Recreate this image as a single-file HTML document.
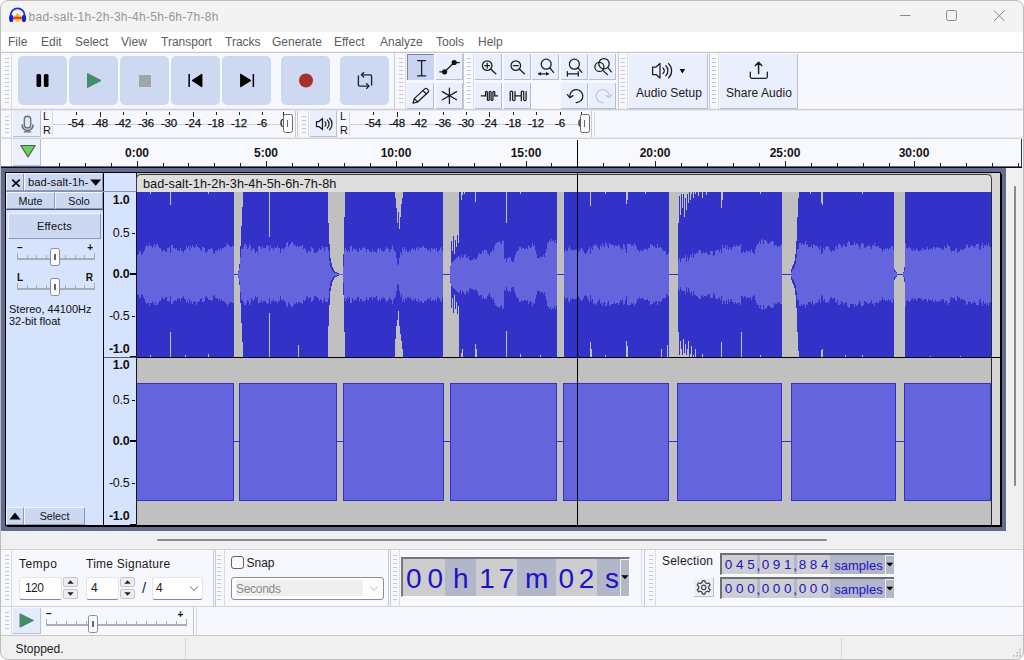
<!DOCTYPE html><html><head><meta charset="utf-8"><title>Audacity</title><style>
*{box-sizing:border-box;margin:0;padding:0}
html,body{width:1024px;height:660px;overflow:hidden;background:#f3f3f3}
body{font-family:"Liberation Sans",sans-serif;font-size:12px;color:#000;position:relative}
.a{position:absolute}
.t{position:absolute;white-space:nowrap;line-height:1}
.grab{position:absolute;width:4px;background:repeating-linear-gradient(to bottom,#c6c7cc 0,#c6c7cc 1px,transparent 1px,transparent 4px)}
.vsep{position:absolute;width:1px;background:#d9dae0}
.hsep{position:absolute;height:1px;background:#d9dae0}
.big{position:absolute;width:49px;height:49px;top:56px;background:#cdd9f0;border-radius:5px}
.sm{position:absolute;background:#e9effc;border-right:1px solid #b9bece;border-bottom:1px solid #b9bece}
.sm.sel{background:#c8d4f1;border:none;border-top:1px solid #7f86a4;border-left:1px solid #7f86a4}
.sm.sel svg{left:-1px;top:-1px}
.sm svg,.big svg{position:absolute;left:0;top:0}
.pbtn{position:absolute;background:#ccd8f1;border-top:1px solid #f2f6ff;border-left:1px solid #f2f6ff;border-right:1px solid #8f98b3;border-bottom:1px solid #8f98b3}
</style></head><body>
<div class="a" style="left:0;top:0;width:1024px;height:31px;background:#f3f3f3"></div>
<svg class="a" style="left:8px;top:7px" width="19" height="18" viewBox="0 0 19 18"><defs><linearGradient id="wg" x1="0" y1="0" x2="0" y2="1"><stop offset="0" stop-color="#ffe23c"/><stop offset="0.42" stop-color="#ff9a1e"/><stop offset="0.5" stop-color="#f0441a"/><stop offset="0.58" stop-color="#ff9a1e"/><stop offset="1" stop-color="#ffe23c"/></linearGradient></defs><path d="M5.300 11L6 9.500 6.800 8.300 7.500 9 8.300 6 9 7.200 9.700 5.300 10.400 7.600 11.100 6.600 11.800 8.800 12.500 8.200 13.200 9.700 13.900 11 13.200 12.400 12.500 13.600 11.800 13.200 11.100 15 10.400 14.200 9.700 15.600 9 14.400 8.300 15.200 7.500 13.200 6.800 13.600 6 12.400Z" fill="url(#wg)"/><rect x="5.300" y="10.600" width="8.600" height="1" fill="#e8201a"/><path d="M2.600 11V8.300a7 7 0 0 1 14 0V11" fill="none" stroke="#1d2be0" stroke-width="1.700"/><ellipse cx="3.300" cy="11.400" rx="2.200" ry="3.700" fill="#1422d4"/><ellipse cx="15.900" cy="11.400" rx="2.200" ry="3.700" fill="#1422d4"/></svg>
<div class="t" id="title" style="left:28.500px;top:11px;font-size:12px;color:#969696;letter-spacing:0.27px">bad-salt-1h-2h-3h-4h-5h-6h-7h-8h</div>
<svg class="a" style="left:890px;top:0" width="134" height="31" viewBox="0 0 134 31"><g stroke="#8a8a8a" stroke-width="1" fill="none"><path d="M10 15.500H20.500"/><rect x="56.500" y="10.500" width="10" height="10" rx="1.800"/><path d="M104 10.5l10.5 10.5M114.5 10.5L104 21"/></g></svg>
<div class="a" style="left:0;top:32px;width:1024px;height:20px;background:#fff"></div>
<div class="t" style="left:8px;top:36px;font-size:12px;color:#5c5c5c">File</div>
<div class="t" style="left:41px;top:36px;font-size:12px;color:#5c5c5c">Edit</div>
<div class="t" style="left:75px;top:36px;font-size:12px;color:#5c5c5c">Select</div>
<div class="t" style="left:121px;top:36px;font-size:12px;color:#5c5c5c">View</div>
<div class="t" style="left:161px;top:36px;font-size:12px;color:#5c5c5c">Transport</div>
<div class="t" style="left:225px;top:36px;font-size:12px;color:#5c5c5c">Tracks</div>
<div class="t" style="left:272px;top:36px;font-size:12px;color:#5c5c5c">Generate</div>
<div class="t" style="left:334px;top:36px;font-size:12px;color:#5c5c5c">Effect</div>
<div class="t" style="left:380px;top:36px;font-size:12px;color:#5c5c5c">Analyze</div>
<div class="t" style="left:436px;top:36px;font-size:12px;color:#5c5c5c">Tools</div>
<div class="t" style="left:478px;top:36px;font-size:12px;color:#5c5c5c">Help</div>
<div class="a" style="left:0;top:52px;width:1024px;height:86px;background:#f7f8fd"></div>
<div class="a" style="left:0;top:51px;width:1024px;height:1px;background:#f0f0f1"></div>
<div class="a" style="left:0;top:52px;width:1024px;height:1px;background:#c9c9cc"></div>
<div class="a" style="left:0;top:109px;width:1024px;height:1px;background:#cfd0d4"></div>
<div class="a" style="left:0;top:110px;width:1024px;height:1px;background:#e9e9ed"></div>
<div class="a" style="left:0;top:108px;width:1024px;height:1px;background:#ebecf1"></div>
<div class="a" style="left:0;top:137px;width:1024px;height:1px;background:#e6e7ec"></div>
<div class="a" style="left:0;top:138px;width:1024px;height:1px;background:#d3d4d9;z-index:2"></div>
<div class="vsep" style="left:11px;top:53px;height:56px;background:#dcdde2"></div>
<div class="grab" style="left:5px;top:58px;height:45px"></div>
<div class="big" style="left:18px"><svg width="49" height="49" viewBox="0 0 49 49"><rect x="18.5" y="18" width="4.6" height="13" rx="1.6" fill="#000"/><rect x="25.9" y="18" width="4.6" height="13" rx="1.6" fill="#000"/></svg></div>
<div class="big" style="left:69px"><svg width="49" height="49" viewBox="0 0 49 49"><path d="M18.5 17.5L32 24.5 18.5 31.5Z" fill="#468b6b" stroke="#468b6b" stroke-width="1" stroke-linejoin="round"/></svg></div>
<div class="big" style="left:120px"><svg width="49" height="49" viewBox="0 0 49 49"><rect x="19" y="19" width="12" height="12" fill="#a2a4ab"/></svg></div>
<div class="big" style="left:171px"><svg width="49" height="49" viewBox="0 0 49 49"><rect x="17.400" y="18" width="1.500" height="13" fill="#000"/><path d="M31 18L21 24.500 31 31Z" fill="#000" stroke="#000" stroke-width="0.8" stroke-linejoin="round"/></svg></div>
<div class="big" style="left:222px"><svg width="49" height="49" viewBox="0 0 49 49"><path d="M18.5 18L29 24.5 18.5 31Z" fill="#000" stroke="#000" stroke-width="0.8" stroke-linejoin="round"/><rect x="30.600" y="18" width="1.500" height="13" fill="#000"/></svg></div>
<div class="big" style="left:281px"><svg width="49" height="49" viewBox="0 0 49 49"><circle cx="25" cy="24.5" r="7" fill="#a92f2f"/></svg></div>
<div class="big" style="left:340px"><svg width="49" height="49" viewBox="0 0 49 49"><g fill="none" stroke="#23232b" stroke-width="1.350" stroke-linejoin="round" stroke-linecap="round"><path d="M21.600 18.800H30.200a1.400 1.400 0 0 1 1.400 1.400V29"/><path d="M23.700 16.500l-2.300 2.300 2.300 2.300"/><path d="M18.400 19.900V28.700a1.400 1.400 0 0 0 1.400 1.400H28.700"/><path d="M26.600 27.800l2.300 2.300-2.300 2.300"/></g></svg></div>
<div class="vsep" style="left:394px;top:53px;height:56px;background:#c9cacf"></div>
<div class="vsep" style="left:405px;top:53px;height:56px;background:#dcdde2"></div>
<div class="grab" style="left:399px;top:58px;height:45px"></div>
<div class="sm sel" style="left:407px;top:54px;width:27px;height:26px"><svg width="27" height="26" viewBox="0 0 27 26"><g fill="none" stroke="#1c1c1c" stroke-width="1.25" stroke-linecap="round" stroke-linejoin="round"><path d="M10.6 6.6H18.6M14.6 6.6V21.9M10.6 21.9H18.6"/></g></svg></div>
<div class="sm " style="left:436px;top:54px;width:27px;height:26px"><svg width="27" height="26" viewBox="0 0 27 26"><g fill="none" stroke="#1c1c1c" stroke-width="1.25" stroke-linecap="round" stroke-linejoin="round"><path d="M3.8 17.800H8.600L18.200 8.500H23.400"/></g><circle cx="8.600" cy="17.800" r="2.600" fill="#111"/><circle cx="18.200" cy="8.500" r="2.600" fill="#111"/></svg></div>
<div class="sm " style="left:407px;top:83px;width:27px;height:26px"><svg width="27" height="26" viewBox="0 0 27 26"><g fill="none" stroke="#1c1c1c" stroke-width="1.25" stroke-linecap="round" stroke-linejoin="round"><path d="M6 20.200l1.300-4.600L17.700 5.900a1.700 1.700 0 0 1 2.400 0l1 1a1.700 1.700 0 0 1 0 2.400L10.600 19Z"/><path d="M7.300 15.600l3.300 3.400M16 7.600l3.400 3.400"/></g></svg></div>
<div class="sm " style="left:436px;top:83px;width:27px;height:26px"><svg width="27" height="26" viewBox="0 0 27 26"><g fill="none" stroke="#1c1c1c" stroke-width="1.25" stroke-linecap="round" stroke-linejoin="round"><path d="M13.400 5.200V20.500M6.300 8.600L20.600 16.800M20.600 8.600L6.300 16.800"/></g></svg></div>
<div class="vsep" style="left:463px;top:53px;height:56px;background:#c9cacf"></div>
<div class="vsep" style="left:473px;top:53px;height:56px;background:#dcdde2"></div>
<div class="grab" style="left:467px;top:58px;height:45px"></div>
<div class="sm " style="left:475px;top:54px;width:27px;height:26px"><svg width="27" height="26" viewBox="0 0 27 26"><circle cx="12.2" cy="11.6" r="4.8" fill="none" stroke="#1c1c1c" stroke-width="1.25" stroke-linecap="round" stroke-linejoin="round"/><path d="M15.59 14.99L20.8 19.8" fill="none" stroke="#1c1c1c" stroke-width="1.25" stroke-linecap="round" stroke-linejoin="round"/><path d="M9.700 11.600h5M12.200 9.100v5" fill="none" stroke="#1c1c1c" stroke-width="1.25" stroke-linecap="round" stroke-linejoin="round" stroke-width="1.600"/></svg></div>
<div class="sm " style="left:504px;top:54px;width:27px;height:26px"><svg width="27" height="26" viewBox="0 0 27 26"><circle cx="11.8" cy="11.6" r="4.8" fill="none" stroke="#1c1c1c" stroke-width="1.25" stroke-linecap="round" stroke-linejoin="round"/><path d="M15.19 14.99L20.4 19.8" fill="none" stroke="#1c1c1c" stroke-width="1.25" stroke-linecap="round" stroke-linejoin="round"/><path d="M9.300 11.600h5" fill="none" stroke="#1c1c1c" stroke-width="1.25" stroke-linecap="round" stroke-linejoin="round" stroke-width="1.600"/></svg></div>
<div class="sm " style="left:532px;top:54px;width:27px;height:26px"><svg width="27" height="26" viewBox="0 0 27 26"><circle cx="14.2" cy="10.2" r="5" fill="none" stroke="#1c1c1c" stroke-width="1.25" stroke-linecap="round" stroke-linejoin="round"/><path d="M17.74 13.74L21.6 18.4" fill="none" stroke="#1c1c1c" stroke-width="1.25" stroke-linecap="round" stroke-linejoin="round"/><path d="M6.500 19.800h10" fill="none" stroke="#1c1c1c" stroke-width="1.25" stroke-linecap="round" stroke-linejoin="round"/><path d="M6 19.800l3-2v4ZM17 19.800l-3-2v4Z" fill="#1c1c1c"/></svg></div>
<div class="sm " style="left:561px;top:54px;width:27px;height:26px"><svg width="27" height="26" viewBox="0 0 27 26"><circle cx="13.4" cy="10.2" r="5" fill="none" stroke="#1c1c1c" stroke-width="1.25" stroke-linecap="round" stroke-linejoin="round"/><path d="M16.94 13.74L20.8 18.4" fill="none" stroke="#1c1c1c" stroke-width="1.25" stroke-linecap="round" stroke-linejoin="round"/><path d="M6.400 19.800h10.900M6.400 17.600v4.400M17.300 17.600v4.400" fill="none" stroke="#1c1c1c" stroke-width="1.25" stroke-linecap="round" stroke-linejoin="round"/></svg></div>
<div class="sm " style="left:589px;top:54px;width:27px;height:26px"><svg width="27" height="26" viewBox="0 0 27 26"><circle cx="10.400" cy="12.900" r="4.500" fill="none" stroke="#1c1c1c" stroke-width="1.25" stroke-linecap="round" stroke-linejoin="round"/><circle cx="15" cy="9.700" r="5.200" fill="none" stroke="#1c1c1c" stroke-width="1.25" stroke-linecap="round" stroke-linejoin="round"/><path d="M18.700 13.400L22.400 17.800M13.600 16.100L18.500 20.700" fill="none" stroke="#1c1c1c" stroke-width="1.25" stroke-linecap="round" stroke-linejoin="round"/></svg></div>
<div class="sm " style="left:475px;top:83px;width:27px;height:26px"><svg width="27" height="26" viewBox="0 0 27 26"><path d="M6.200 12.800H10.500M19.750 12.800H22.600" fill="none" stroke="#1c1c1c" stroke-width="1.25" stroke-linecap="round" stroke-linejoin="round" stroke="#555"/><path d="M10.500 12.800V9.300a0.925 0.925 0 0 1 1.85 0V16.500a0.925 0.925 0 0 0 1.85 0V9.300a0.925 0.925 0 0 1 1.85 0V16.500a0.925 0.925 0 0 0 1.85 0V9.300a0.925 0.925 0 0 1 1.85 0V12.800" fill="none" stroke="#1c1c1c" stroke-width="1.25" stroke-linecap="round" stroke-linejoin="round" stroke-width="1.050"/></svg></div>
<div class="sm " style="left:504px;top:83px;width:27px;height:26px"><svg width="27" height="26" viewBox="0 0 27 26"><path d="M11 12.800H17.300" fill="none" stroke="#1c1c1c" stroke-width="1.25" stroke-linecap="round" stroke-linejoin="round" stroke="#555"/><path d="M6.200 17.700V9.300a1.200 1.200 0 0 1 2.400 0v7.200a1.200 1.200 0 0 0 2.400 0V8.500M17.300 17.700V9.300a1.200 1.200 0 0 1 2.400 0v7.200a1.200 1.200 0 0 0 2.400 0V8.500" fill="none" stroke="#1c1c1c" stroke-width="1.25" stroke-linecap="round" stroke-linejoin="round" stroke-width="1.150"/></svg></div>
<div class="sm " style="left:561px;top:83px;width:27px;height:26px"><svg width="27" height="26" viewBox="0 0 27 26"><path d="M8.900 14.200a6.500 6.500 0 1 1 6.300 5.400" fill="none" stroke="#1c1c1c" stroke-width="1.25" stroke-linecap="round" stroke-linejoin="round"/><path d="M6.400 11.600l2.400 3 3.200-2" fill="none" stroke="#1c1c1c" stroke-width="1.25" stroke-linecap="round" stroke-linejoin="round"/></svg></div>
<div class="sm " style="left:589px;top:83px;width:27px;height:26px"><svg width="27" height="26" viewBox="0 0 27 26"><path d="M20.100 14.200a6.500 6.500 0 1 0-6.300 5.400" fill="none" stroke="#c3c6d0" stroke-width="1.25" stroke-linecap="round" stroke-linejoin="round"/><path d="M22.600 11.600l-2.400 3-3.200-2" fill="none" stroke="#c3c6d0" stroke-width="1.25" stroke-linecap="round" stroke-linejoin="round"/></svg></div>
<div class="vsep" style="left:618px;top:53px;height:56px;background:#c9cacf"></div>
<div class="vsep" style="left:627px;top:53px;height:56px;background:#dcdde2"></div>
<div class="grab" style="left:621px;top:58px;height:45px"></div>
<div class="sm " style="left:629px;top:54px;width:79px;height:55px"><svg width="79" height="55" viewBox="0 0 79 55"></svg></div>
<svg class="a" style="left:648px;top:58px" width="44" height="24" viewBox="0 0 44 24"><g fill="none" stroke="#1c1c1c" stroke-width="1.25" stroke-linecap="round" stroke-linejoin="round"><path d="M4.600 9H8L12 5.500V20L8 16.500H4.600Z"/><path d="M15 10a3.600 3.600 0 0 1 0 5.500M17.800 7.800a6.800 6.800 0 0 1 0 9.900M20.600 5.600a10 10 0 0 1 0 14.300"/></g><path d="M31.600 11h5.600l-2.800 4.400Z" fill="#111"/></svg>
<div class="t" style="left:636px;top:87px;font-size:12px;color:#1a1a1a;letter-spacing:0.05px">Audio Setup</div>
<div class="vsep" style="left:709px;top:53px;height:56px;background:#c9cacf"></div>
<div class="vsep" style="left:718px;top:53px;height:56px;background:#dcdde2"></div>
<div class="grab" style="left:712px;top:58px;height:45px"></div>
<div class="sm " style="left:720px;top:54px;width:78px;height:55px"><svg width="78" height="55" viewBox="0 0 78 55"></svg></div>
<svg class="a" style="left:746px;top:58px" width="26" height="24" viewBox="0 0 26 24"><g fill="none" stroke="#1c1c1c" stroke-width="1.25" stroke-linecap="round" stroke-linejoin="round"><path d="M12.600 15.500V4.600M9.500 7.600L12.600 4.300 15.700 7.600" stroke-width="1.450"/><path d="M4.300 14V18.800a1.500 1.500 0 0 0 1.500 1.500H19.800a1.500 1.500 0 0 0 1.500-1.500V14"/></g></svg>
<div class="t" style="left:726px;top:87px;font-size:12px;color:#1a1a1a;letter-spacing:0.05px">Share Audio</div>
<div class="vsep" style="left:11px;top:111px;height:26px;background:#dcdde2"></div>
<div class="grab" style="left:5px;top:116px;height:17px"></div>
<div class="sm" style="left:13px;top:111px;width:28px;height:26px"></div>
<svg class="a" style="left:13px;top:111px" width="28" height="26" viewBox="0 0 28 26"><g fill="none" stroke="#6b6d73" stroke-width="1.350" stroke-linecap="round"><rect x="11.300" y="5.200" width="6.400" height="11.800" rx="3.200" fill="#e3e7f2"/><path d="M9.200 14.200a5.350 5.350 0 0 0 10.700 0" stroke-width="1.700"/><path d="M14.500 19.600v1M11.300 20.900h6.400"/></g></svg>
<div class="t" style="left:43px;top:111px;font-size:11px;color:#111">L</div>
<div class="t" style="left:43px;top:125px;font-size:11px;color:#111">R</div>
<div class="a" style="left:52px;top:124px;width:234px;height:1px;background:#cdcfd6"></div>
<div class="a" style="left:52px;top:111px;width:1px;height:25px;background:#dadbe1"></div>
<div class="a" style="left:76px;top:112px;width:1px;height:3px;background:#222"></div>
<div class="t" style="left:61.0px;top:118px;width:30px;text-align:center;font-size:11.5px;color:#111;letter-spacing:-0.2px;-webkit-text-stroke:0.25px #111">-54</div>
<div class="a" style="left:100px;top:112px;width:1px;height:5px;background:#222"></div>
<div class="t" style="left:85.0px;top:118px;width:30px;text-align:center;font-size:11.5px;color:#111;letter-spacing:-0.2px;-webkit-text-stroke:0.25px #111">-48</div>
<div class="a" style="left:123px;top:112px;width:1px;height:3px;background:#222"></div>
<div class="t" style="left:108.0px;top:118px;width:30px;text-align:center;font-size:11.5px;color:#111;letter-spacing:-0.2px;-webkit-text-stroke:0.25px #111">-42</div>
<div class="a" style="left:146px;top:112px;width:1px;height:3px;background:#222"></div>
<div class="t" style="left:131.0px;top:118px;width:30px;text-align:center;font-size:11.5px;color:#111;letter-spacing:-0.2px;-webkit-text-stroke:0.25px #111">-36</div>
<div class="a" style="left:169px;top:112px;width:1px;height:3px;background:#222"></div>
<div class="t" style="left:154.0px;top:118px;width:30px;text-align:center;font-size:11.5px;color:#111;letter-spacing:-0.2px;-webkit-text-stroke:0.25px #111">-30</div>
<div class="a" style="left:193px;top:112px;width:1px;height:5px;background:#222"></div>
<div class="t" style="left:178.0px;top:118px;width:30px;text-align:center;font-size:11.5px;color:#111;letter-spacing:-0.2px;-webkit-text-stroke:0.25px #111">-24</div>
<div class="a" style="left:216px;top:112px;width:1px;height:3px;background:#222"></div>
<div class="t" style="left:201.0px;top:118px;width:30px;text-align:center;font-size:11.5px;color:#111;letter-spacing:-0.2px;-webkit-text-stroke:0.25px #111">-18</div>
<div class="a" style="left:239px;top:112px;width:1px;height:3px;background:#222"></div>
<div class="t" style="left:224.0px;top:118px;width:30px;text-align:center;font-size:11.5px;color:#111;letter-spacing:-0.2px;-webkit-text-stroke:0.25px #111">-12</div>
<div class="a" style="left:262px;top:112px;width:1px;height:3px;background:#222"></div>
<div class="t" style="left:247.0px;top:118px;width:30px;text-align:center;font-size:11.5px;color:#111;letter-spacing:-0.2px;-webkit-text-stroke:0.25px #111">-6</div>
<div class="a" style="left:283px;top:112px;width:1px;height:5px;background:#222"></div>
<div class="t" style="left:268.0px;top:118px;width:30px;text-align:center;font-size:11.5px;color:#111;letter-spacing:-0.2px;-webkit-text-stroke:0.25px #111">0</div>
<div class="a" style="left:282.5px;top:114px;width:10px;height:19px;background:#fbfbfd;border:1px solid #6a6a6e;border-radius:2.500px"></div>
<div class="a" style="left:286.8px;top:120px;width:1.500px;height:7px;background:#666"></div>
<div class="vsep" style="left:295px;top:111px;height:26px;background:#c9cacf"></div>
<div class="vsep" style="left:297px;top:111px;height:26px;background:#c9cacf"></div>
<div class="vsep" style="left:308px;top:111px;height:26px;background:#dcdde2"></div>
<div class="grab" style="left:302px;top:116px;height:17px"></div>
<div class="sm" style="left:310px;top:111px;width:27px;height:26px"></div>
<svg class="a" style="left:310px;top:111px" width="28" height="26" viewBox="0 0 28 26"><g fill="none" stroke="#1c1c1c" stroke-width="1.25" stroke-linecap="round" stroke-linejoin="round"><path d="M6.500 10.500H9L12.500 7.500V18.500L9 15.500H6.500Z"/><path d="M15 10.800a3 3 0 0 1 0 4.400M17.300 9a5.500 5.500 0 0 1 0 8M19.600 7.300a8 8 0 0 1 0 11.400"/></g></svg>
<div class="t" style="left:340px;top:111px;font-size:11px;color:#111">L</div>
<div class="t" style="left:340px;top:125px;font-size:11px;color:#111">R</div>
<div class="a" style="left:349px;top:124px;width:234px;height:1px;background:#cdcfd6"></div>
<div class="a" style="left:349px;top:111px;width:1px;height:25px;background:#dadbe1"></div>
<div class="a" style="left:373px;top:112px;width:1px;height:3px;background:#222"></div>
<div class="t" style="left:358.0px;top:118px;width:30px;text-align:center;font-size:11.5px;color:#111;letter-spacing:-0.2px;-webkit-text-stroke:0.25px #111">-54</div>
<div class="a" style="left:397px;top:112px;width:1px;height:5px;background:#222"></div>
<div class="t" style="left:382.0px;top:118px;width:30px;text-align:center;font-size:11.5px;color:#111;letter-spacing:-0.2px;-webkit-text-stroke:0.25px #111">-48</div>
<div class="a" style="left:419px;top:112px;width:1px;height:3px;background:#222"></div>
<div class="t" style="left:404.0px;top:118px;width:30px;text-align:center;font-size:11.5px;color:#111;letter-spacing:-0.2px;-webkit-text-stroke:0.25px #111">-42</div>
<div class="a" style="left:443px;top:112px;width:1px;height:3px;background:#222"></div>
<div class="t" style="left:428.0px;top:118px;width:30px;text-align:center;font-size:11.5px;color:#111;letter-spacing:-0.2px;-webkit-text-stroke:0.25px #111">-36</div>
<div class="a" style="left:466px;top:112px;width:1px;height:3px;background:#222"></div>
<div class="t" style="left:451.0px;top:118px;width:30px;text-align:center;font-size:11.5px;color:#111;letter-spacing:-0.2px;-webkit-text-stroke:0.25px #111">-30</div>
<div class="a" style="left:489px;top:112px;width:1px;height:5px;background:#222"></div>
<div class="t" style="left:474.0px;top:118px;width:30px;text-align:center;font-size:11.5px;color:#111;letter-spacing:-0.2px;-webkit-text-stroke:0.25px #111">-24</div>
<div class="a" style="left:513px;top:112px;width:1px;height:3px;background:#222"></div>
<div class="t" style="left:498.0px;top:118px;width:30px;text-align:center;font-size:11.5px;color:#111;letter-spacing:-0.2px;-webkit-text-stroke:0.25px #111">-18</div>
<div class="a" style="left:536px;top:112px;width:1px;height:3px;background:#222"></div>
<div class="t" style="left:521.0px;top:118px;width:30px;text-align:center;font-size:11.5px;color:#111;letter-spacing:-0.2px;-webkit-text-stroke:0.25px #111">-12</div>
<div class="a" style="left:560px;top:112px;width:1px;height:3px;background:#222"></div>
<div class="t" style="left:545.0px;top:118px;width:30px;text-align:center;font-size:11.5px;color:#111;letter-spacing:-0.2px;-webkit-text-stroke:0.25px #111">-6</div>
<div class="a" style="left:581px;top:112px;width:1px;height:5px;background:#222"></div>
<div class="t" style="left:566.0px;top:118px;width:30px;text-align:center;font-size:11.5px;color:#111;letter-spacing:-0.2px;-webkit-text-stroke:0.25px #111">0</div>
<div class="a" style="left:579.5px;top:114px;width:10px;height:19px;background:#fbfbfd;border:1px solid #6a6a6e;border-radius:2.500px"></div>
<div class="a" style="left:583.8px;top:120px;width:1.500px;height:7px;background:#666"></div>
<div class="vsep" style="left:591px;top:111px;height:26px;background:#c9cacf"></div>
<div class="vsep" style="left:594px;top:111px;height:26px;background:#dcdde2"></div>
<div class="a" style="left:0;top:138px;width:1024px;height:29px;background:#f8f9ff"></div>
<div class="a" style="left:13px;top:139px;width:28px;height:27px;background:#eaf0fd;border-right:1px solid #b9bece;border-bottom:1px solid #b9bece"></div>
<svg class="a" style="left:13px;top:139px" width="28" height="27" viewBox="0 0 28 27"><path d="M7.800 6.500H22.200L15 18Z" fill="#6ad35e" stroke="#4d5a4d" stroke-width="1.200" stroke-linejoin="round"/></svg>
<div class="vsep" style="left:11px;top:139px;height:27px;background:#dcdde2"></div>
<div class="a" style="left:1px;top:166px;width:1021px;height:1px;background:#6a6c78"></div>
<div class="a" style="left:1px;top:167px;width:1021px;height:1px;background:#0c0d12"></div>
<div class="a" style="left:1021px;top:138px;width:1px;height:29px;background:#30333f"></div>
<div class="a" style="left:59px;top:163px;width:1px;height:4px;background:#222"></div>
<div class="a" style="left:85px;top:163px;width:1px;height:4px;background:#222"></div>
<div class="a" style="left:111px;top:163px;width:1px;height:4px;background:#222"></div>
<div class="a" style="left:137px;top:161px;width:1px;height:6px;background:#222"></div>
<div class="t" style="left:107px;top:147px;width:60px;text-align:center;font-size:12px;font-weight:bold;color:#141414">0:00</div>
<div class="a" style="left:163px;top:163px;width:1px;height:4px;background:#222"></div>
<div class="a" style="left:188px;top:163px;width:1px;height:4px;background:#222"></div>
<div class="a" style="left:214px;top:163px;width:1px;height:4px;background:#222"></div>
<div class="a" style="left:240px;top:163px;width:1px;height:4px;background:#222"></div>
<div class="a" style="left:266px;top:161px;width:1px;height:6px;background:#222"></div>
<div class="t" style="left:236px;top:147px;width:60px;text-align:center;font-size:12px;font-weight:bold;color:#141414">5:00</div>
<div class="a" style="left:292px;top:163px;width:1px;height:4px;background:#222"></div>
<div class="a" style="left:318px;top:163px;width:1px;height:4px;background:#222"></div>
<div class="a" style="left:344px;top:163px;width:1px;height:4px;background:#222"></div>
<div class="a" style="left:370px;top:163px;width:1px;height:4px;background:#222"></div>
<div class="a" style="left:396px;top:161px;width:1px;height:6px;background:#222"></div>
<div class="t" style="left:366px;top:147px;width:60px;text-align:center;font-size:12px;font-weight:bold;color:#141414">10:00</div>
<div class="a" style="left:422px;top:163px;width:1px;height:4px;background:#222"></div>
<div class="a" style="left:448px;top:163px;width:1px;height:4px;background:#222"></div>
<div class="a" style="left:474px;top:163px;width:1px;height:4px;background:#222"></div>
<div class="a" style="left:500px;top:163px;width:1px;height:4px;background:#222"></div>
<div class="a" style="left:526px;top:161px;width:1px;height:6px;background:#222"></div>
<div class="t" style="left:496px;top:147px;width:60px;text-align:center;font-size:12px;font-weight:bold;color:#141414">15:00</div>
<div class="a" style="left:551px;top:163px;width:1px;height:4px;background:#222"></div>
<div class="a" style="left:577px;top:163px;width:1px;height:4px;background:#222"></div>
<div class="a" style="left:603px;top:163px;width:1px;height:4px;background:#222"></div>
<div class="a" style="left:629px;top:163px;width:1px;height:4px;background:#222"></div>
<div class="a" style="left:655px;top:161px;width:1px;height:6px;background:#222"></div>
<div class="t" style="left:625px;top:147px;width:60px;text-align:center;font-size:12px;font-weight:bold;color:#141414">20:00</div>
<div class="a" style="left:681px;top:163px;width:1px;height:4px;background:#222"></div>
<div class="a" style="left:707px;top:163px;width:1px;height:4px;background:#222"></div>
<div class="a" style="left:733px;top:163px;width:1px;height:4px;background:#222"></div>
<div class="a" style="left:759px;top:163px;width:1px;height:4px;background:#222"></div>
<div class="a" style="left:785px;top:161px;width:1px;height:6px;background:#222"></div>
<div class="t" style="left:755px;top:147px;width:60px;text-align:center;font-size:12px;font-weight:bold;color:#141414">25:00</div>
<div class="a" style="left:811px;top:163px;width:1px;height:4px;background:#222"></div>
<div class="a" style="left:837px;top:163px;width:1px;height:4px;background:#222"></div>
<div class="a" style="left:863px;top:163px;width:1px;height:4px;background:#222"></div>
<div class="a" style="left:889px;top:163px;width:1px;height:4px;background:#222"></div>
<div class="a" style="left:914px;top:161px;width:1px;height:6px;background:#222"></div>
<div class="t" style="left:884px;top:147px;width:60px;text-align:center;font-size:12px;font-weight:bold;color:#141414">30:00</div>
<div class="a" style="left:940px;top:163px;width:1px;height:4px;background:#222"></div>
<div class="a" style="left:966px;top:163px;width:1px;height:4px;background:#222"></div>
<div class="a" style="left:992px;top:163px;width:1px;height:4px;background:#222"></div>
<div class="a" style="left:1018px;top:163px;width:1px;height:4px;background:#222"></div>
<div class="a" style="left:577px;top:140px;width:1px;height:27px;background:#000"></div>
<div class="a" style="left:1px;top:168px;width:1005px;height:363px;background:#636b8e"></div>
<div class="a" style="left:1006px;top:168px;width:18px;height:363px;background:#f0f0f0"></div>
<div class="a" style="left:1014px;top:186px;width:2px;height:300px;background:#8b8b8b;border-radius:1px"></div>
<div class="a" style="left:0;top:531px;width:1024px;height:18px;background:#f0f0f0"></div>
<div class="a" style="left:157px;top:539px;width:670px;height:2px;background:#8b8b8b;border-radius:1px"></div>
<div class="a" style="left:5px;top:172px;width:996px;height:354px;background:#000"></div>
<div class="a" style="left:7px;top:174px;width:995px;height:353px;background:#000"></div>
<div class="a" style="left:6px;top:173px;width:97px;height:352px;background:#d6e3fc"></div>
<div class="a" style="left:104px;top:173px;width:32px;height:352px;background:#d6e3fc"></div>
<div class="a" style="left:103px;top:173px;width:1px;height:352px;background:#000"></div>
<div class="a" style="left:136px;top:173px;width:864px;height:352px;background:#c0c0c0"></div>
<div class="a" style="left:992px;top:173px;width:8px;height:352px;background:#d6d6d6"></div>
<svg class="a" style="left:0;top:0" width="1024" height="660" viewBox="0 0 1024 660" shape-rendering="crispEdges"><rect x="137" y="274" width="854" height="1" fill="#3232c8"/><path d="M137 274V192H138V192H139V192H140V192H141V192H142V192H143V192H144V192H145V192H146V192H147V192H148V192H149V192H150V194H151V192H152V192H153V192H154V192H155V192H156V192H157V192H158V192H159V192H160V192H161V192H162V192H163V192H164V192H165V192H166V192H167V192H168V192H169V192H170V205H171V192H172V192H173V192H174V192H175V192H176V192H177V192H178V192H179V192H180V192H181V192H182V192H183V192H184V192H185V192H186V192H187V192H188V192H189V192H190V192H191V192H192V192H193V192H194V192H195V192H196V192H197V192H198V192H199V192H200V192H201V192H202V192H203V192H204V192H205V192H206V192H207V192H208V194H209V192H210V192H211V192H212V192H213V192H214V192H215V192H216V192H217V192H218V192H219V192H220V192H221V192H222V192H223V192H224V192H225V192H226V192H227V192H228V192H229V192H230V192H231V192H232V192H233V192H234V357H233V357H232V357H231V357H230V357H229V357H228V357H227V357H226V357H225V357H224V357H223V357H222V357H221V357H220V357H219V357H218V357H217V357H216V357H215V357H214V357H213V357H212V357H211V357H210V357H209V354H208V357H207V357H206V357H205V357H204V357H203V357H202V357H201V357H200V357H199V357H198V357H197V357H196V357H195V357H194V357H193V357H192V357H191V357H190V357H189V357H188V357H187V357H186V355H185V357H184V357H183V357H182V357H181V357H180V357H179V357H178V357H177V357H176V357H175V357H174V357H173V357H172V357H171V332H170V357H169V357H168V357H167V357H166V357H165V357H164V357H163V357H162V357H161V357H160V357H159V357H158V357H157V357H156V357H155V357H154V357H153V357H152V357H151V355H150V357H149V357H148V357H147V357H146V357H145V357H144V357H143V357H142V357H141V357H140V357H139V357H138V357H137ZM238 274V271H239V264H240V246H241V226H242V207H243V192H244V192H245V192H246V192H247V192H248V192H249V192H250V192H251V192H252V192H253V192H254V192H255V192H256V192H257V192H258V192H259V192H260V192H261V192H262V192H263V192H264V192H265V192H266V192H267V192H268V192H269V237H270V192H271V192H272V192H273V192H274V192H275V192H276V192H277V192H278V192H279V192H280V192H281V192H282V192H283V192H284V192H285V192H286V192H287V192H288V192H289V192H290V192H291V192H292V192H293V192H294V192H295V192H296V192H297V192H298V192H299V192H300V192H301V192H302V192H303V192H304V192H305V192H306V192H307V192H308V192H309V192H310V192H311V192H312V192H313V192H314V192H315V192H316V192H317V192H318V192H319V192H320V192H321V192H322V192H323V192H324V192H325V192H326V192H327V192H328V223H329V244H330V258H331V263H332V267H333V269H334V271H335V272H336V272H337V273H338V273H339V274H340V274H341V274H342V274H343V254H344V217H345V192H346V192H347V192H348V192H349V192H350V192H351V192H352V192H353V192H354V192H355V192H356V192H357V192H358V192H359V192H360V192H361V192H362V192H363V192H364V192H365V192H366V192H367V192H368V192H369V192H370V192H371V192H372V192H373V192H374V192H375V192H376V192H377V192H378V192H379V192H380V192H381V192H382V192H383V192H384V192H385V192H386V192H387V192H388V192H389V192H390V192H391V192H392V192H393V192H394V192H395V198H396V208H397V223H398V212H399V229H400V217H401V204H402V198H403V192H404V192H405V192H406V192H407V192H408V192H409V192H410V192H411V192H412V192H413V192H414V192H415V192H416V192H417V192H418V192H419V192H420V192H421V192H422V192H423V192H424V192H425V192H426V192H427V192H428V192H429V192H430V192H431V192H432V192H433V192H434V192H435V192H436V192H437V192H438V192H439V192H440V192H441V192H442V192H443V357H442V357H441V357H440V357H439V357H438V357H437V357H436V357H435V357H434V357H433V357H432V357H431V357H430V357H429V357H428V357H427V357H426V357H425V357H424V357H423V357H422V357H421V357H420V357H419V357H418V357H417V357H416V357H415V357H414V357H413V357H412V357H411V357H410V357H409V357H408V357H407V357H406V357H405V357H404V357H403V349H402V341H401V334H400V326H399V311H398V320H397V326H396V339H395V357H394V357H393V357H392V357H391V357H390V357H389V357H388V357H387V357H386V357H385V357H384V357H383V357H382V357H381V357H380V357H379V357H378V357H377V357H376V357H375V357H374V357H373V357H372V357H371V357H370V357H369V357H368V357H367V357H366V357H365V357H364V357H363V357H362V357H361V357H360V357H359V357H358V357H357V357H356V357H355V357H354V357H353V357H352V357H351V357H350V357H349V357H348V357H347V357H346V357H345V332H344V295H343V275H342V275H341V275H340V275H339V276H338V276H337V277H336V277H335V278H334V280H333V282H332V286H331V291H330V305H329V326H328V357H327V357H326V357H325V357H324V357H323V357H322V357H321V357H320V357H319V357H318V357H317V357H316V357H315V357H314V357H313V357H312V357H311V357H310V357H309V357H308V357H307V357H306V357H305V357H304V357H303V357H302V357H301V357H300V357H299V345H298V357H297V357H296V357H295V357H294V357H293V357H292V357H291V357H290V357H289V357H288V357H287V357H286V357H285V357H284V357H283V357H282V357H281V357H280V357H279V357H278V357H277V357H276V357H275V357H274V357H273V357H272V357H271V357H270V313H269V357H268V357H267V357H266V357H265V357H264V357H263V357H262V357H261V357H260V357H259V357H258V357H257V357H256V357H255V357H254V357H253V357H252V357H251V357H250V357H249V357H248V357H247V357H246V357H245V357H244V357H243V342H242V323H241V303H240V285H239V278H238ZM450 274V266H451V241H452V251H453V236H454V254H455V240H456V247H457V235H458V243H459V192H460V192H461V200H462V195H463V192H464V194H465V192H466V192H467V192H468V192H469V192H470V192H471V192H472V192H473V192H474V192H475V202H476V192H477V192H478V192H479V192H480V192H481V192H482V192H483V192H484V192H485V192H486V192H487V192H488V192H489V192H490V192H491V192H492V192H493V192H494V192H495V192H496V192H497V192H498V192H499V192H500V192H501V192H502V192H503V192H504V192H505V192H506V223H507V192H508V192H509V192H510V192H511V192H512V192H513V192H514V192H515V192H516V192H517V192H518V192H519V192H520V194H521V192H522V192H523V192H524V192H525V192H526V192H527V192H528V192H529V192H530V192H531V192H532V192H533V192H534V192H535V192H536V192H537V192H538V192H539V192H540V192H541V192H542V192H543V192H544V192H545V192H546V192H547V192H548V192H549V192H550V192H551V192H552V192H553V192H554V192H555V192H556V192H557V357H556V357H555V357H554V357H553V357H552V357H551V357H550V357H549V357H548V357H547V357H546V357H545V357H544V357H543V357H542V357H541V355H540V357H539V357H538V357H537V357H536V357H535V357H534V357H533V357H532V357H531V357H530V357H529V357H528V357H527V357H526V357H525V357H524V357H523V357H522V357H521V354H520V357H519V357H518V357H517V357H516V357H515V357H514V357H513V357H512V357H511V357H510V357H509V357H508V357H507V331H506V357H505V357H504V357H503V357H502V357H501V357H500V357H499V357H498V357H497V357H496V357H495V357H494V357H493V357H492V357H491V357H490V357H489V357H488V357H487V357H486V357H485V357H484V357H483V357H482V357H481V357H480V357H479V357H478V357H477V349H476V344H475V357H474V357H473V357H472V357H471V357H470V357H469V357H468V357H467V357H466V357H465V357H464V357H463V349H462V353H461V357H460V357H459V306H458V314H457V302H456V309H455V295H454V313H453V298H452V308H451V283H450ZM564 274V192H565V192H566V192H567V192H568V192H569V192H570V192H571V192H572V192H573V192H574V192H575V192H576V192H577V192H578V192H579V192H580V192H581V192H582V192H583V192H584V192H585V192H586V192H587V192H588V192H589V192H590V206H591V192H592V192H593V192H594V192H595V192H596V192H597V192H598V192H599V192H600V192H601V192H602V192H603V192H604V192H605V194H606V192H607V192H608V192H609V192H610V192H611V192H612V192H613V192H614V192H615V192H616V192H617V192H618V192H619V192H620V192H621V192H622V192H623V192H624V192H625V192H626V204H627V200H628V192H629V192H630V192H631V192H632V192H633V192H634V192H635V192H636V192H637V192H638V192H639V192H640V192H641V192H642V192H643V192H644V192H645V194H646V192H647V192H648V192H649V192H650V192H651V192H652V192H653V192H654V192H655V192H656V192H657V192H658V192H659V192H660V192H661V192H662V192H663V192H664V192H665V192H666V192H667V192H668V192H669V357H668V345H667V357H666V357H665V357H664V357H663V357H662V349H661V357H660V357H659V357H658V357H657V357H656V357H655V357H654V357H653V357H652V357H651V357H650V357H649V357H648V357H647V357H646V357H645V357H644V357H643V357H642V357H641V357H640V357H639V357H638V357H637V357H636V357H635V357H634V357H633V357H632V357H631V357H630V357H629V357H628V346H627V341H626V357H625V357H624V357H623V357H622V357H621V357H620V357H619V357H618V357H617V357H616V357H615V357H614V357H613V357H612V357H611V357H610V357H609V357H608V357H607V357H606V355H605V357H604V357H603V357H602V357H601V357H600V357H599V357H598V357H597V357H596V357H595V357H594V357H593V357H592V349H591V342H590V357H589V357H588V357H587V357H586V357H585V357H584V357H583V357H582V357H581V357H580V357H579V357H578V357H577V357H576V357H575V357H574V357H573V357H572V357H571V357H570V357H569V357H568V357H567V357H566V357H565V357H564ZM678 274V223H679V196H680V215H681V194H682V208H683V194H684V217H685V198H686V210H687V194H688V203H689V192H690V200H691V194H692V192H693V198H694V192H695V194H696V192H697V192H698V196H699V192H700V192H701V192H702V198H703V192H704V192H705V192H706V195H707V192H708V192H709V192H710V192H711V192H712V192H713V192H714V192H715V192H716V192H717V192H718V192H719V192H720V192H721V208H722V200H723V192H724V192H725V192H726V192H727V192H728V192H729V192H730V192H731V192H732V192H733V192H734V192H735V192H736V192H737V192H738V192H739V192H740V192H741V192H742V192H743V192H744V192H745V192H746V192H747V192H748V192H749V192H750V192H751V192H752V192H753V192H754V192H755V192H756V192H757V192H758V192H759V192H760V194H761V192H762V192H763V192H764V192H765V192H766V192H767V192H768V192H769V192H770V192H771V192H772V192H773V192H774V192H775V192H776V192H777V192H778V192H779V192H780V192H781V192H782V357H781V357H780V357H779V357H778V357H777V357H776V357H775V357H774V357H773V357H772V357H771V357H770V357H769V357H768V357H767V357H766V357H765V357H764V357H763V357H762V357H761V355H760V357H759V357H758V357H757V357H756V357H755V357H754V357H753V357H752V357H751V357H750V357H749V357H748V357H747V357H746V357H745V357H744V357H743V357H742V332H741V357H740V357H739V357H738V357H737V357H736V357H735V357H734V357H733V357H732V357H731V357H730V357H729V357H728V357H727V357H726V357H725V357H724V357H723V357H722V342H721V357H720V357H719V357H718V357H717V357H716V357H715V357H714V357H713V357H712V357H711V357H710V357H709V357H708V357H707V357H706V357H705V357H704V357H703V354H702V357H701V357H700V357H699V357H698V357H697V357H696V349H695V357H694V355H693V357H692V346H691V354H690V357H689V341H688V349H687V355H686V344H685V353H684V339H683V355H682V349H681V341H680V355H679V332H678ZM791 274V269H792V266H793V264H794V261H795V254H796V241H797V217H798V198H799V192H800V192H801V192H802V192H803V192H804V192H805V192H806V192H807V192H808V192H809V192H810V194H811V192H812V192H813V192H814V192H815V192H816V192H817V192H818V192H819V192H820V192H821V203H822V205H823V192H824V192H825V192H826V192H827V192H828V192H829V192H830V192H831V192H832V192H833V192H834V192H835V192H836V192H837V192H838V192H839V192H840V192H841V192H842V192H843V192H844V192H845V192H846V192H847V192H848V192H849V192H850V192H851V192H852V192H853V192H854V192H855V192H856V192H857V192H858V192H859V192H860V192H861V192H862V194H863V192H864V192H865V192H866V192H867V192H868V192H869V192H870V192H871V192H872V192H873V192H874V192H875V192H876V192H877V192H878V192H879V192H880V192H881V192H882V192H883V192H884V192H885V192H886V192H887V192H888V192H889V192H890V192H891V192H892V192H893V192H894V269H895V271H896V272H897V277H896V278H895V280H894V357H893V357H892V357H891V357H890V357H889V357H888V357H887V357H886V357H885V357H884V357H883V357H882V357H881V357H880V357H879V357H878V357H877V357H876V357H875V357H874V357H873V357H872V357H871V357H870V357H869V357H868V357H867V357H866V357H865V357H864V357H863V355H862V357H861V357H860V357H859V357H858V357H857V357H856V357H855V357H854V357H853V357H852V357H851V357H850V357H849V357H848V357H847V357H846V355H845V357H844V357H843V357H842V357H841V357H840V357H839V357H838V357H837V357H836V357H835V357H834V357H833V357H832V357H831V357H830V357H829V357H828V357H827V357H826V357H825V357H824V357H823V349H822V350H821V357H820V357H819V357H818V357H817V357H816V357H815V357H814V357H813V357H812V357H811V357H810V357H809V357H808V357H807V357H806V357H805V357H804V357H803V357H802V357H801V357H800V357H799V351H798V332H797V308H796V295H795V288H794V285H793V283H792V280H791ZM903 274V272H904V267H905V192H906V192H907V192H908V192H909V192H910V192H911V192H912V192H913V192H914V192H915V192H916V192H917V192H918V192H919V192H920V192H921V192H922V192H923V192H924V192H925V192H926V192H927V192H928V192H929V192H930V192H931V192H932V192H933V192H934V192H935V192H936V192H937V192H938V192H939V192H940V192H941V192H942V192H943V192H944V192H945V192H946V192H947V192H948V192H949V192H950V192H951V192H952V192H953V192H954V192H955V192H956V192H957V192H958V192H959V192H960V192H961V192H962V192H963V192H964V192H965V192H966V192H967V192H968V192H969V192H970V192H971V192H972V192H973V192H974V192H975V192H976V192H977V192H978V192H979V192H980V192H981V192H982V192H983V192H984V192H985V192H986V192H987V192H988V192H989V192H990V192H991V357H990V357H989V357H988V357H987V357H986V357H985V357H984V357H983V357H982V357H981V357H980V357H979V357H978V357H977V357H976V357H975V357H974V357H973V357H972V357H971V357H970V357H969V357H968V357H967V357H966V357H965V357H964V357H963V357H962V357H961V356H960V357H959V357H958V357H957V357H956V357H955V357H954V357H953V357H952V357H951V357H950V357H949V357H948V357H947V357H946V357H945V357H944V357H943V357H942V357H941V357H940V357H939V357H938V357H937V357H936V357H935V357H934V357H933V357H932V357H931V356H930V357H929V357H928V357H927V357H926V357H925V357H924V357H923V357H922V357H921V357H920V357H919V357H918V357H917V357H916V357H915V357H914V357H913V357H912V357H911V357H910V357H909V357H908V357H907V357H906V357H905V282H904V277H903Z" fill="#3232c8"/><path d="M137 274V255H138V254H139V251H140V251H141V255H142V254H143V252H144V250H145V247H146V245H147V246H148V246H149V243H150V246H151V246H152V248H153V246H154V244H155V247H156V244H157V244H158V246H159V248H160V248H161V250H162V252H163V250H164V250H165V252H166V252H167V248H168V248H169V247H170V253H171V245H172V245H173V248H174V248H175V249H176V248H177V251H178V250H179V251H180V248H181V251H182V251H183V253H184V250H185V250H186V246H187V248H188V246H189V250H190V246H191V248H192V245H193V247H194V248H195V247H196V244H197V247H198V247H199V248H200V250H201V251H202V247H203V247H204V248H205V252H206V253H207V251H208V249H209V249H210V249H211V248H212V249H213V253H214V254H215V251H216V251H217V250H218V249H219V251H220V248H221V250H222V248H223V248H224V247H225V247H226V245H227V243H228V245H229V246H230V247H231V247H232V246H233V246H234V303H233V303H232V302H231V302H230V303H229V304H228V306H227V304H226V302H225V302H224V301H223V301H222V299H221V301H220V298H219V300H218V299H217V298H216V298H215V295H214V296H213V300H212V301H211V300H210V300H209V300H208V298H207V296H206V297H205V301H204V302H203V302H202V298H201V299H200V301H199V302H198V302H197V305H196V302H195V301H194V302H193V304H192V301H191V303H190V299H189V303H188V301H187V303H186V299H185V299H184V296H183V298H182V298H181V301H180V298H179V299H178V298H177V301H176V300H175V301H174V301H173V304H172V304H171V296H170V302H169V301H168V301H167V297H166V297H165V299H164V299H163V297H162V299H161V301H160V301H159V303H158V305H157V305H156V302H155V305H154V303H153V301H152V303H151V303H150V306H149V303H148V303H147V304H146V302H145V299H144V297H143V295H142V294H141V298H140V298H139V295H138V294H137ZM238 274V272H239V268H240V257H241V249H242V249H243V247H244V244H245V244H246V246H247V249H248V248H249V244H250V246H251V251H252V249H253V248H254V250H255V253H256V251H257V252H258V246H259V246H260V247H261V249H262V246H263V248H264V248H265V248H266V246H267V245H268V246H269V251H270V245H271V248H272V248H273V250H274V247H275V248H276V248H277V246H278V248H279V248H280V253H281V249H282V248H283V250H284V248H285V247H286V243H287V242H288V247H289V245H290V244H291V242H292V242H293V244H294V246H295V245H296V247H297V245H298V247H299V247H300V246H301V246H302V245H303V249H304V248H305V249H306V252H307V253H308V250H309V251H310V252H311V247H312V248H313V249H314V253H315V253H316V252H317V252H318V250H319V248H320V250H321V249H322V246H323V248H324V251H325V247H326V247H327V247H328V251H329V261H330V267H331V269H332V271H333V272H334V273H335V273H336V273H337V274H338V274H339V274H340V274H341V274H342V274H343V266H344V251H345V248H346V250H347V252H348V250H349V252H350V246H351V246H352V251H353V249H354V248H355V250H356V249H357V252H358V252H359V248H360V250H361V250H362V248H363V248H364V247H365V249H366V252H367V249H368V249H369V251H370V252H371V252H372V249H373V252H374V251H375V252H376V253H377V249H378V248H379V250H380V248H381V251H382V250H383V252H384V251H385V249H386V247H387V248H388V249H389V252H390V250H391V249H392V245H393V249H394V251H395V252H396V258H397V265H398V264H399V258H400V252H401V255H402V247H403V250H404V247H405V251H406V249H407V252H408V252H409V250H410V252H411V249H412V248H413V250H414V249H415V251H416V248H417V247H418V250H419V247H420V248H421V248H422V246H423V246H424V248H425V248H426V248H427V250H428V251H429V249H430V252H431V248H432V249H433V249H434V248H435V250H436V248H437V252H438V251H439V250H440V248H441V247H442V251H443V298H442V302H441V301H440V299H439V298H438V297H437V301H436V299H435V301H434V300H433V300H432V301H431V297H430V300H429V298H428V299H427V301H426V301H425V301H424V303H423V303H422V301H421V301H420V302H419V299H418V302H417V301H416V298H415V300H414V299H413V301H412V300H411V297H410V299H409V297H408V297H407V300H406V298H405V302H404V299H403V302H402V294H401V297H400V291H399V285H398V284H397V291H396V297H395V298H394V300H393V304H392V300H391V299H390V297H389V300H388V301H387V302H386V300H385V298H384V297H383V299H382V298H381V301H380V299H379V301H378V300H377V296H376V297H375V298H374V297H373V300H372V297H371V297H370V298H369V300H368V300H367V297H366V300H365V302H364V301H363V301H362V299H361V299H360V301H359V297H358V297H357V300H356V299H355V301H354V300H353V298H352V303H351V303H350V297H349V299H348V297H347V299H346V301H345V298H344V283H343V275H342V275H341V275H340V275H339V275H338V275H337V276H336V276H335V276H334V277H333V278H332V280H331V282H330V288H329V298H328V302H327V302H326V302H325V298H324V301H323V303H322V300H321V299H320V301H319V299H318V297H317V297H316V296H315V296H314V300H313V301H312V302H311V297H310V298H309V299H308V296H307V297H306V300H305V301H304V300H303V304H302V303H301V303H300V302H299V302H298V304H297V302H296V304H295V303H294V305H293V307H292V307H291V305H290V304H289V302H288V307H287V306H286V302H285V301H284V299H283V301H282V300H281V296H280V301H279V301H278V303H277V301H276V301H275V302H274V299H273V301H272V301H271V304H270V298H269V303H268V304H267V303H266V301H265V301H264V301H263V303H262V300H261V302H260V303H259V303H258V297H257V298H256V296H255V299H254V301H253V300H252V298H251V303H250V305H249V301H248V300H247V303H246V305H245V305H244V302H243V300H242V300H241V292H240V281H239V277H238ZM450 274V267H451V263H452V262H453V261H454V260H455V259H456V258H457V257H458V256H459V257H460V259H461V255H462V258H463V257H464V255H465V254H466V258H467V258H468V256H469V260H470V261H471V260H472V260H473V259H474V258H475V260H476V259H477V257H478V254H479V253H480V254H481V254H482V250H483V252H484V250H485V250H486V250H487V253H488V254H489V256H490V252H491V252H492V249H493V251H494V246H495V244H496V243H497V242H498V242H499V241H500V243H501V244H502V240H503V241H504V259H505V258H506V262H507V259H508V257H509V258H510V257H511V261H512V262H513V262H514V258H515V255H516V252H517V251H518V250H519V247H520V247H521V249H522V248H523V248H524V249H525V249H526V248H527V249H528V245H529V247H530V248H531V247H532V243H533V246H534V245H535V250H536V254H537V258H538V258H539V258H540V256H541V257H542V257H543V255H544V257H545V253H546V249H547V243H548V242H549V240H550V242H551V239H552V241H553V240H554V243H555V240H556V243H557V306H556V309H555V306H554V309H553V308H552V310H551V307H550V309H549V307H548V306H547V300H546V296H545V292H544V294H543V292H542V292H541V293H540V291H539V291H538V291H537V295H536V299H535V304H534V303H533V306H532V302H531V301H530V302H529V304H528V300H527V301H526V300H525V300H524V301H523V301H522V300H521V302H520V302H519V299H518V298H517V297H516V294H515V291H514V287H513V287H512V288H511V292H510V291H509V292H508V290H507V287H506V291H505V290H504V308H503V309H502V305H501V306H500V308H499V307H498V307H497V306H496V305H495V303H494V298H493V300H492V297H491V297H490V293H489V295H488V296H487V299H486V299H485V299H484V297H483V299H482V295H481V295H480V296H479V295H478V292H477V290H476V289H475V291H474V290H473V289H472V289H471V288H470V289H469V293H468V291H467V291H466V295H465V294H464V292H463V291H462V294H461V290H460V292H459V293H458V292H457V291H456V290H455V289H454V288H453V287H452V286H451V282H450ZM564 274V252H565V249H566V251H567V251H568V248H569V246H570V250H571V249H572V251H573V250H574V250H575V250H576V250H577V249H578V252H579V251H580V249H581V248H582V249H583V251H584V253H585V254H586V253H587V251H588V249H589V247H590V254H591V248H592V250H593V245H594V246H595V244H596V245H597V247H598V248H599V250H600V245H601V247H602V243H603V246H604V247H605V243H606V243H607V246H608V248H609V243H610V244H611V245H612V245H613V245H614V247H615V245H616V246H617V246H618V244H619V246H620V249H621V248H622V250H623V244H624V245H625V249H626V253H627V244H628V244H629V244H630V244H631V246H632V245H633V246H634V243H635V245H636V247H637V250H638V250H639V252H640V250H641V251H642V251H643V250H644V249H645V249H646V249H647V250H648V248H649V248H650V244H651V245H652V245H653V247H654V246H655V248H656V248H657V244H658V248H659V247H660V247H661V248H662V250H663V251H664V251H665V251H666V255H667V254H668V253H669V296H668V295H667V294H666V298H665V298H664V298H663V299H662V301H661V302H660V302H659V301H658V305H657V301H656V301H655V303H654V302H653V304H652V304H651V305H650V301H649V301H648V299H647V300H646V300H645V300H644V299H643V298H642V298H641V299H640V297H639V299H638V299H637V302H636V304H635V306H634V303H633V304H632V303H631V305H630V305H629V305H628V305H627V296H626V300H625V304H624V305H623V299H622V301H621V300H620V303H619V305H618V303H617V303H616V304H615V302H614V304H613V304H612V304H611V305H610V306H609V301H608V303H607V306H606V306H605V302H604V303H603V306H602V302H601V304H600V299H599V301H598V302H597V304H596V305H595V303H594V304H593V299H592V301H591V295H590V302H589V300H588V298H587V296H586V295H585V296H584V298H583V300H582V301H581V300H580V298H579V297H578V300H577V299H576V299H575V299H574V299H573V298H572V300H571V299H570V303H569V301H568V298H567V298H566V300H565V297H564ZM678 274V260H679V258H680V262H681V259H682V258H683V258H684V258H685V255H686V262H687V257H688V261H689V258H690V255H691V257H692V253H693V258H694V254H695V254H696V253H697V253H698V251H699V250H700V250H701V253H702V254H703V252H704V253H705V253H706V252H707V254H708V255H709V255H710V251H711V251H712V251H713V256H714V255H715V251H716V250H717V250H718V250H719V252H720V249H721V253H722V245H723V248H724V248H725V245H726V249H727V245H728V250H729V247H730V249H731V250H732V247H733V247H734V245H735V247H736V245H737V246H738V246H739V246H740V244H741V253H742V253H743V251H744V253H745V252H746V250H747V252H748V251H749V251H750V252H751V249H752V252H753V253H754V254H755V249H756V246H757V244H758V244H759V241H760V244H761V240H762V239H763V244H764V240H765V240H766V241H767V243H768V244H769V243H770V242H771V241H772V241H773V242H774V246H775V245H776V245H777V247H778V246H779V247H780V245H781V245H782V304H781V304H780V302H779V303H778V302H777V304H776V304H775V303H774V307H773V308H772V308H771V307H770V306H769V305H768V306H767V308H766V309H765V309H764V305H763V310H762V309H761V305H760V308H759V305H758V305H757V303H756V300H755V295H754V296H753V297H752V300H751V297H750V298H749V298H748V297H747V299H746V297H745V296H744V298H743V296H742V296H741V305H740V303H739V303H738V303H737V304H736V302H735V304H734V302H733V302H732V299H731V300H730V302H729V299H728V304H727V300H726V304H725V301H724V301H723V304H722V296H721V300H720V297H719V299H718V299H717V299H716V298H715V294H714V293H713V298H712V298H711V298H710V294H709V294H708V295H707V297H706V296H705V296H704V297H703V295H702V296H701V299H700V299H699V298H698V296H697V296H696V295H695V295H694V291H693V296H692V292H691V294H690V291H689V288H688V292H687V287H686V294H685V291H684V291H683V291H682V290H681V287H680V291H679V289H678ZM791 274V272H792V270H793V269H794V267H795V264H796V258H797V249H798V249H799V243H800V243H801V245H802V243H803V245H804V244H805V241H806V245H807V244H808V247H809V247H810V247H811V245H812V248H813V244H814V245H815V246H816V246H817V246H818V248H819V250H820V246H821V254H822V253H823V248H824V250H825V247H826V246H827V247H828V246H829V249H830V251H831V252H832V250H833V251H834V251H835V247H836V246H837V249H838V244H839V244H840V245H841V248H842V247H843V244H844V246H845V246H846V247H847V243H848V241H849V242H850V245H851V245H852V245H853V245H854V242H855V245H856V243H857V244H858V245H859V249H860V246H861V243H862V243H863V244H864V248H865V247H866V247H867V246H868V245H869V246H870V247H871V249H872V245H873V246H874V243H875V246H876V247H877V246H878V246H879V248H880V248H881V249H882V252H883V249H884V250H885V248H886V249H887V248H888V250H889V248H890V249H891V246H892V246H893V250H894V272H895V272H896V273H897V276H896V277H895V277H894V299H893V303H892V303H891V300H890V301H889V299H888V301H887V300H886V301H885V299H884V300H883V297H882V300H881V301H880V301H879V303H878V303H877V302H876V303H875V306H874V303H873V304H872V300H871V302H870V303H869V304H868V303H867V302H866V302H865V301H864V305H863V306H862V306H861V303H860V300H859V304H858V305H857V306H856V304H855V307H854V304H853V304H852V304H851V304H850V307H849V308H848V306H847V302H846V303H845V303H844V305H843V302H842V301H841V304H840V305H839V305H838V300H837V303H836V302H835V298H834V298H833V299H832V297H831V298H830V300H829V303H828V302H827V303H826V302H825V299H824V301H823V296H822V295H821V303H820V299H819V301H818V303H817V303H816V303H815V304H814V305H813V301H812V304H811V302H810V302H809V302H808V305H807V304H806V308H805V305H804V304H803V306H802V304H801V306H800V306H799V300H798V300H797V291H796V285H795V282H794V280H793V279H792V277H791ZM903 274V273H904V271H905V243H906V248H907V249H908V248H909V247H910V248H911V250H912V251H913V249H914V251H915V250H916V248H917V250H918V251H919V251H920V250H921V251H922V248H923V249H924V250H925V250H926V249H927V247H928V250H929V249H930V249H931V248H932V250H933V247H934V247H935V249H936V247H937V248H938V247H939V248H940V248H941V250H942V249H943V250H944V246H945V248H946V248H947V244H948V246H949V246H950V250H951V252H952V251H953V251H954V251H955V249H956V248H957V253H958V251H959V252H960V249H961V250H962V250H963V249H964V249H965V248H966V244H967V245H968V248H969V247H970V247H971V245H972V246H973V246H974V248H975V246H976V244H977V244H978V244H979V249H980V250H981V246H982V243H983V248H984V245H985V246H986V244H987V246H988V243H989V246H990V247H991V302H990V303H989V306H988V303H987V305H986V303H985V304H984V301H983V306H982V303H981V299H980V300H979V305H978V305H977V305H976V303H975V301H974V303H973V303H972V304H971V302H970V302H969V301H968V304H967V305H966V301H965V300H964V300H963V299H962V299H961V300H960V297H959V298H958V296H957V301H956V300H955V298H954V298H953V298H952V297H951V299H950V303H949V303H948V305H947V301H946V301H945V303H944V299H943V300H942V299H941V301H940V301H939V302H938V301H937V302H936V300H935V302H934V302H933V299H932V301H931V300H930V300H929V299H928V302H927V300H926V299H925V299H924V300H923V301H922V298H921V299H920V298H919V298H918V299H917V301H916V299H915V298H914V300H913V298H912V299H911V301H910V302H909V301H908V300H907V301H906V306H905V278H904V276H903Z" fill="#6464dc"/><rect x="137" y="441" width="854" height="1" fill="#3232c8"/><rect x="137" y="383" width="97" height="118" fill="#3232c8"/><rect x="137" y="384" width="96" height="116" fill="#6464dc"/><rect x="239" y="383" width="98" height="118" fill="#3232c8"/><rect x="240" y="384" width="96" height="116" fill="#6464dc"/><rect x="343" y="383" width="101" height="118" fill="#3232c8"/><rect x="344" y="384" width="99" height="116" fill="#6464dc"/><rect x="450" y="383" width="107" height="118" fill="#3232c8"/><rect x="451" y="384" width="105" height="116" fill="#6464dc"/><rect x="563" y="383" width="106" height="118" fill="#3232c8"/><rect x="564" y="384" width="104" height="116" fill="#6464dc"/><rect x="677" y="383" width="105" height="118" fill="#3232c8"/><rect x="678" y="384" width="103" height="116" fill="#6464dc"/><rect x="791" y="383" width="105" height="118" fill="#3232c8"/><rect x="792" y="384" width="103" height="116" fill="#6464dc"/><rect x="904" y="383" width="87" height="118" fill="#3232c8"/><rect x="905" y="384" width="85" height="116" fill="#6464dc"/></svg>
<div class="a" style="left:136px;top:173px;width:1px;height:352px;background:#15161c"></div>
<div class="a" style="left:136px;top:174px;width:856px;height:18px;background:#dedede;border:1px solid #3c3c3c;border-bottom:none;border-radius:5px 5px 0 0"></div>
<div class="t" style="left:143px;top:177.500px;font-size:12.700px;color:#111;letter-spacing:0.05px">bad-salt-1h-2h-3h-4h-5h-6h-7h-8h</div>
<div class="a" style="left:991px;top:192px;width:1px;height:333px;background:#2a2a2a"></div>
<div class="a" style="left:104px;top:357px;width:32px;height:1px;background:#5e5e62"></div>
<div class="a" style="left:136px;top:357px;width:864px;height:1px;background:#000"></div>
<div class="a" style="left:577px;top:173px;width:1px;height:352px;background:#000"></div>
<div class="t" style="left:97px;top:193.8px;width:32.300px;text-align:right;font-size:12.500px;letter-spacing:-0.300px;font-weight:bold;color:#111">1.0</div>
<div class="t" style="left:97px;top:227px;width:32.300px;text-align:right;font-size:12.500px;letter-spacing:-0.300px;font-weight:normal;color:#111">0.5</div>
<div class="t" style="left:97px;top:268px;width:32.300px;text-align:right;font-size:12.500px;letter-spacing:-0.300px;font-weight:bold;color:#111">0.0</div>
<div class="t" style="left:97px;top:310px;width:32.300px;text-align:right;font-size:12.500px;letter-spacing:-0.300px;font-weight:normal;color:#111">-0.5</div>
<div class="t" style="left:97px;top:343px;width:32.300px;text-align:right;font-size:12.500px;letter-spacing:-0.300px;font-weight:bold;color:#111">-1.0</div>
<div class="t" style="left:97px;top:359px;width:32.300px;text-align:right;font-size:12.500px;letter-spacing:-0.300px;font-weight:bold;color:#111">1.0</div>
<div class="t" style="left:97px;top:394px;width:32.300px;text-align:right;font-size:12.500px;letter-spacing:-0.300px;font-weight:normal;color:#111">0.5</div>
<div class="t" style="left:97px;top:435px;width:32.300px;text-align:right;font-size:12.500px;letter-spacing:-0.300px;font-weight:bold;color:#111">0.0</div>
<div class="t" style="left:97px;top:477px;width:32.300px;text-align:right;font-size:12.500px;letter-spacing:-0.300px;font-weight:normal;color:#111">-0.5</div>
<div class="t" style="left:97px;top:510px;width:32.300px;text-align:right;font-size:12.500px;letter-spacing:-0.300px;font-weight:bold;color:#111">-1.0</div>
<div class="a" style="left:132px;top:233px;width:3px;height:1px;background:#000"></div>
<div class="a" style="left:132px;top:316px;width:3px;height:1px;background:#000"></div>
<div class="a" style="left:132px;top:400px;width:3px;height:1px;background:#000"></div>
<div class="a" style="left:132px;top:483px;width:3px;height:1px;background:#000"></div>
<div class="a" style="left:130px;top:273px;width:6px;height:2px;background:#000"></div>
<div class="a" style="left:130px;top:440px;width:6px;height:2px;background:#000"></div>
<div class="a" style="left:130px;top:356px;width:6px;height:1px;background:#000"></div>
<div class="a" style="left:130px;top:524px;width:6px;height:1px;background:#000"></div>
<div class="pbtn" style="left:6px;top:173px;width:18px;height:18px;"></div>
<svg class="a" style="left:6px;top:173px" width="18" height="18" viewBox="0 0 18 18"><path d="M6.300 6.600l7.400 7M13.700 6.600l-7.400 7" stroke="#000" stroke-width="1.500"/></svg>
<div class="pbtn" style="left:24px;top:173px;width:79px;height:18px;"></div>
<div class="t" style="left:28px;top:177px;font-size:11.2px;color:#111;letter-spacing:0.05px">bad-salt-1h-</div>
<svg class="a" style="left:89px;top:178px" width="14" height="10" viewBox="0 0 14 10"><path d="M1.200 1.500H12.200L6.700 7.800Z" fill="#000"/></svg>
<div class="a" style="left:6px;top:191px;width:130px;height:1px;background:#8a93ad"></div>
<div class="pbtn" style="left:6px;top:192px;width:49px;height:17px;top:192px"></div>
<div class="t" style="left:6px;top:195.8px;width:49px;text-align:center;font-size:10.7px;color:#111;letter-spacing:0px">Mute</div>
<div class="pbtn" style="left:55px;top:192px;width:48px;height:17px;"></div>
<div class="t" style="left:55px;top:195.8px;width:48px;text-align:center;font-size:10.7px;color:#111;letter-spacing:0px">Solo</div>
<div class="a" style="left:6px;top:209px;width:97px;height:1px;background:#4a5068"></div>
<div class="pbtn" style="left:8px;top:213px;width:93px;height:26px;"></div>
<div class="t" style="left:8px;top:221.2px;width:93px;text-align:center;font-size:11px;color:#111;letter-spacing:0.25px">Effects</div>
<div class="t" style="left:17px;top:243px;font-size:10px;font-weight:bold;color:#111">&#8211;</div>
<div class="t" style="left:78px;top:243px;width:15px;text-align:right;font-size:10px;font-weight:bold;color:#111">+</div>
<div class="a" style="left:17px;top:258px;width:78px;height:2px;background:#a9adb8"></div>
<div class="a" style="left:17px;top:253px;width:1px;height:5px;background:#a9adb8"></div>
<div class="a" style="left:27px;top:255px;width:1px;height:3px;background:#a9adb8"></div>
<div class="a" style="left:36px;top:255px;width:1px;height:3px;background:#a9adb8"></div>
<div class="a" style="left:46px;top:255px;width:1px;height:3px;background:#a9adb8"></div>
<div class="a" style="left:55px;top:255px;width:1px;height:3px;background:#a9adb8"></div>
<div class="a" style="left:65px;top:255px;width:1px;height:3px;background:#a9adb8"></div>
<div class="a" style="left:75px;top:255px;width:1px;height:3px;background:#a9adb8"></div>
<div class="a" style="left:84px;top:255px;width:1px;height:3px;background:#a9adb8"></div>
<div class="a" style="left:94px;top:253px;width:1px;height:5px;background:#a9adb8"></div>
<div class="a" style="left:50px;top:248px;width:10px;height:18px;background:#fafbfe;border:1px solid #8a8c94;border-radius:2.5px"></div>
<div class="a" style="left:54px;top:254px;width:2px;height:6px;background:#666"></div>
<div class="t" style="left:17px;top:273px;font-size:10px;font-weight:bold;color:#111">L</div>
<div class="t" style="left:78px;top:273px;width:15px;text-align:right;font-size:10px;font-weight:bold;color:#111">R</div>
<div class="a" style="left:17px;top:288px;width:78px;height:2px;background:#a9adb8"></div>
<div class="a" style="left:17px;top:283px;width:1px;height:5px;background:#a9adb8"></div>
<div class="a" style="left:27px;top:285px;width:1px;height:3px;background:#a9adb8"></div>
<div class="a" style="left:36px;top:285px;width:1px;height:3px;background:#a9adb8"></div>
<div class="a" style="left:46px;top:285px;width:1px;height:3px;background:#a9adb8"></div>
<div class="a" style="left:55px;top:285px;width:1px;height:3px;background:#a9adb8"></div>
<div class="a" style="left:65px;top:285px;width:1px;height:3px;background:#a9adb8"></div>
<div class="a" style="left:75px;top:285px;width:1px;height:3px;background:#a9adb8"></div>
<div class="a" style="left:84px;top:285px;width:1px;height:3px;background:#a9adb8"></div>
<div class="a" style="left:94px;top:283px;width:1px;height:5px;background:#a9adb8"></div>
<div class="a" style="left:50px;top:278px;width:10px;height:18px;background:#fafbfe;border:1px solid #8a8c94;border-radius:2.5px"></div>
<div class="a" style="left:54px;top:284px;width:2px;height:6px;background:#666"></div>
<div class="t" style="left:9px;top:304px;font-size:11px;color:#111">Stereo, 44100Hz</div>
<div class="t" style="left:9px;top:316px;font-size:11px;color:#111">32-bit float</div>
<div class="pbtn" style="left:6px;top:507px;width:18px;height:18px;"></div>
<svg class="a" style="left:6px;top:507px" width="18" height="18" viewBox="0 0 18 18"><path d="M3.500 12.500H14.500L9 5.500Z" fill="#000"/></svg>
<div class="pbtn" style="left:24px;top:507px;width:61px;height:18px;"></div>
<div class="t" style="left:24px;top:511.3px;width:61px;text-align:center;font-size:10.7px;color:#111;letter-spacing:0px">Select</div>
<div class="a" style="left:0;top:549px;width:1024px;height:87px;background:#f7f8fd"></div>
<div class="a" style="left:0;top:549px;width:1024px;height:1px;background:#cfd0d4"></div>
<div class="a" style="left:0;top:606px;width:1024px;height:1px;background:#d3d4d9"></div>
<div class="vsep" style="left:11px;top:550px;height:56px;background:#dcdde2"></div>
<div class="grab" style="left:5px;top:555px;height:46px"></div>
<div class="t" style="left:19px;top:558px;font-size:12px;color:#1a1a1a;letter-spacing:0.45px">Tempo</div>
<div class="t" style="left:86px;top:558px;font-size:12px;color:#1a1a1a;letter-spacing:0.25px">Time Signature</div>
<div class="a" style="left:19px;top:577px;width:43px;height:23px;background:#fff;border:1px solid #e4e4e8;border-bottom:1px solid #868686;border-radius:3px"></div>
<div class="t" style="left:25px;top:581.7px;font-size:12px;color:#1a1a1a;letter-spacing:-0.55px">120</div>
<div class="a" style="left:63px;top:577px;width:15px;height:10px;background:#ededf0;border:1px solid #c6c6cb;border-radius:2px"></div>
<svg class="a" style="left:63px;top:577px" width="15" height="10" viewBox="0 0 15 10"><path d="M4.300 6.800L7.500 3.200 10.700 6.800Z" fill="#222"/></svg>
<div class="a" style="left:63px;top:589px;width:15px;height:10px;background:#ededf0;border:1px solid #c6c6cb;border-radius:2px"></div>
<svg class="a" style="left:63px;top:589px" width="15" height="10" viewBox="0 0 15 10"><path d="M4.300 3.200L7.500 6.800 10.700 3.200Z" fill="#222"/></svg>
<div class="a" style="left:86px;top:577px;width:33px;height:23px;background:#fff;border:1px solid #e4e4e8;border-bottom:1px solid #868686;border-radius:3px"></div>
<div class="t" style="left:91px;top:581.7px;font-size:12px;color:#1a1a1a;letter-spacing:0px">4</div>
<div class="a" style="left:120px;top:577px;width:15px;height:10px;background:#ededf0;border:1px solid #c6c6cb;border-radius:2px"></div>
<svg class="a" style="left:120px;top:577px" width="15" height="10" viewBox="0 0 15 10"><path d="M4.300 6.800L7.500 3.200 10.700 6.800Z" fill="#222"/></svg>
<div class="a" style="left:120px;top:589px;width:15px;height:10px;background:#ededf0;border:1px solid #c6c6cb;border-radius:2px"></div>
<svg class="a" style="left:120px;top:589px" width="15" height="10" viewBox="0 0 15 10"><path d="M4.300 3.200L7.500 6.800 10.700 3.200Z" fill="#222"/></svg>
<div class="t" style="left:142px;top:580px;font-size:15px;color:#222">/</div>
<div class="a" style="left:152px;top:577px;width:51px;height:23px;background:#fff;border:1px solid #e4e4e8;border-bottom:1px solid #868686;border-radius:3px"></div>
<div class="t" style="left:156px;top:581.7px;font-size:12px;color:#1a1a1a;letter-spacing:0px">4</div>
<svg class="a" style="left:189px;top:584px" width="10" height="9" viewBox="0 0 10 9"><path d="M1.200 2.500L5 6.500 8.800 2.500" fill="none" stroke="#666" stroke-width="1"/></svg>
<div class="vsep" style="left:213px;top:550px;height:56px;background:#c9cacf"></div>
<div class="vsep" style="left:215px;top:550px;height:56px;background:#c9cacf"></div>
<div class="vsep" style="left:224px;top:550px;height:56px;background:#dcdde2"></div>
<div class="grab" style="left:217px;top:555px;height:46px"></div>
<div class="a" style="left:231px;top:556px;width:13px;height:13px;background:#f8f8f8;border:1px solid #626262;border-radius:3px"></div>
<div class="t" style="left:246.500px;top:557px;font-size:12px;color:#1a1a1a">Snap</div>
<div class="a" style="left:231px;top:577px;width:153px;height:23px;background:#fdfdfe;border:1px solid #8e8e8e;border-radius:3px"></div>
<div class="a" style="left:236px;top:580px;width:127px;height:16px;background:#efeff0"></div>
<div class="t" style="left:236px;top:582.500px;font-size:12px;color:#8a8a8a;letter-spacing:-0.3px">Seconds</div>
<svg class="a" style="left:369px;top:584px" width="10" height="9" viewBox="0 0 10 9"><path d="M1.200 2.500L5 6.500 8.800 2.500" fill="none" stroke="#b9b9b9" stroke-width="1"/></svg>
<div class="vsep" style="left:388px;top:550px;height:56px;background:#c9cacf"></div>
<div class="vsep" style="left:390px;top:550px;height:56px;background:#c9cacf"></div>
<div class="vsep" style="left:399px;top:550px;height:56px;background:#dcdde2"></div>
<div class="grab" style="left:393px;top:555px;height:46px"></div>
<div class="a" style="left:401px;top:557px;width:229px;height:40px;background:#cdcdcf;border-top:2px solid #77777b;border-left:2px solid #77777b;border-right:1px solid #fdfdfe;border-bottom:1px solid #fdfdfe"></div>
<div class="a" style="left:445px;top:559px;width:31px;height:37px;background:#b1b7c9"></div>
<div class="a" style="left:517px;top:559px;width:39px;height:37px;background:#b1b7c9"></div>
<div class="a" style="left:597px;top:559px;width:24px;height:37px;background:#b1b7c9"></div>
<div class="a" style="left:620px;top:559px;width:9px;height:37px;background:#b3b8c7;border-left:1px solid #eceef4;border-top:1px solid #eceef4"></div>
<div class="t" style="left:398.8px;top:564.700px;width:30px;text-align:center;font-size:28px;color:#1c12c6">0</div>
<div class="t" style="left:420.4px;top:564.700px;width:30px;text-align:center;font-size:28px;color:#1c12c6">0</div>
<div class="t" style="left:445.8px;top:564.700px;width:30px;text-align:center;font-size:28px;color:#1c12c6">h</div>
<div class="t" style="left:472.0px;top:564.700px;width:30px;text-align:center;font-size:28px;color:#1c12c6">1</div>
<div class="t" style="left:491.5px;top:564.700px;width:30px;text-align:center;font-size:28px;color:#1c12c6">7</div>
<div class="t" style="left:521.7px;top:564.700px;width:30px;text-align:center;font-size:28px;color:#1c12c6">m</div>
<div class="t" style="left:551.2px;top:564.700px;width:30px;text-align:center;font-size:28px;color:#1c12c6">0</div>
<div class="t" style="left:571.5px;top:564.700px;width:30px;text-align:center;font-size:28px;color:#1c12c6">2</div>
<div class="t" style="left:596.9px;top:564.700px;width:30px;text-align:center;font-size:28px;color:#1c12c6">s</div>
<svg class="a" style="left:621px;top:574px" width="8" height="6" viewBox="0 0 8 6"><path d="M0.200 1.200H7.600L3.900 5.300Z" fill="#000"/></svg>
<div class="vsep" style="left:641px;top:550px;height:56px;background:#dcdde2"></div>
<div class="vsep" style="left:644px;top:550px;height:56px;background:#c9cacf"></div>
<div class="vsep" style="left:655px;top:550px;height:56px;background:#dcdde2"></div>
<div class="grab" style="left:649px;top:555px;height:46px"></div>
<div class="t" style="left:662px;top:555px;font-size:12px;color:#1a1a1a;letter-spacing:0.2px">Selection</div>
<div class="sm" style="left:694px;top:578px;width:20px;height:19px"></div>
<svg class="a" style="left:694px;top:578px" width="20" height="19" viewBox="0 0 20 19"><path d="M8.12 4.55L8.55 2.60L10.85 2.60L11.28 4.55L13.11 5.61L15.02 5.00L16.17 6.99L14.69 8.34L14.69 10.46L16.17 11.81L15.02 13.80L13.11 13.19L11.28 14.25L10.85 16.20L8.55 16.20L8.12 14.25L6.29 13.19L4.38 13.80L3.23 11.81L4.71 10.46L4.71 8.34L3.23 6.99L4.38 5.00L6.29 5.61Z" fill="none" stroke="#444" stroke-width="1.250" stroke-linejoin="round"/><circle cx="9.700" cy="9.400" r="2.200" fill="none" stroke="#444" stroke-width="1.200"/></svg>
<div class="a" style="left:720px;top:553px;width:174px;height:22px;background:#cecfd2;border-top:2px solid #6e6e72;border-left:2px solid #6e6e72;border-bottom:1px solid #fdfdfe"></div>
<div class="a" style="left:757.4px;top:555px;width:2.4px;height:19px;background:#b1b7c9"></div>
<div class="a" style="left:794.3px;top:555px;width:2.4px;height:19px;background:#b1b7c9"></div>
<div class="a" style="left:830px;top:555px;width:55.0px;height:19px;background:#b1b7c9"></div>
<div class="a" style="left:885px;top:555px;width:9px;height:19px;background:#b3b8c7;border-left:1px solid #eceef4;border-top:1px solid #eceef4"></div>
<div class="t" style="left:720.6px;top:558.2px;width:16px;text-align:center;font-size:13.500px;color:#1c12c6">0</div>
<div class="t" style="left:731.8px;top:558.2px;width:16px;text-align:center;font-size:13.500px;color:#1c12c6">4</div>
<div class="t" style="left:742.9px;top:558.2px;width:16px;text-align:center;font-size:13.500px;color:#1c12c6">5</div>
<div class="t" style="left:754.3px;top:558.7px;width:8px;text-align:center;font-size:13.500px;color:#1c12c6">,</div>
<div class="t" style="left:757.5px;top:558.2px;width:16px;text-align:center;font-size:13.500px;color:#1c12c6">0</div>
<div class="t" style="left:768.6px;top:558.2px;width:16px;text-align:center;font-size:13.500px;color:#1c12c6">9</div>
<div class="t" style="left:779.8px;top:558.2px;width:16px;text-align:center;font-size:13.500px;color:#1c12c6">1</div>
<div class="t" style="left:791.2px;top:558.7px;width:8px;text-align:center;font-size:13.500px;color:#1c12c6">,</div>
<div class="t" style="left:794.4px;top:558.2px;width:16px;text-align:center;font-size:13.500px;color:#1c12c6">8</div>
<div class="t" style="left:805.5px;top:558.2px;width:16px;text-align:center;font-size:13.500px;color:#1c12c6">8</div>
<div class="t" style="left:816.7px;top:558.2px;width:16px;text-align:center;font-size:13.500px;color:#1c12c6">4</div>
<div class="t" style="left:834.300px;top:558.7px;font-size:13px;color:#1c12c6">samples</div>
<svg class="a" style="left:886px;top:562px" width="8" height="6" viewBox="0 0 8 6"><path d="M0.300 0.800H7.300L3.800 4.600Z" fill="#000"/></svg>
<div class="a" style="left:720px;top:577px;width:174px;height:22px;background:#cecfd2;border-top:2px solid #6e6e72;border-left:2px solid #6e6e72;border-bottom:1px solid #fdfdfe"></div>
<div class="a" style="left:757.4px;top:579px;width:2.4px;height:19px;background:#b1b7c9"></div>
<div class="a" style="left:794.3px;top:579px;width:2.4px;height:19px;background:#b1b7c9"></div>
<div class="a" style="left:830px;top:579px;width:55.0px;height:19px;background:#b1b7c9"></div>
<div class="a" style="left:885px;top:579px;width:9px;height:19px;background:#b3b8c7;border-left:1px solid #eceef4;border-top:1px solid #eceef4"></div>
<div class="t" style="left:720.6px;top:582.2px;width:16px;text-align:center;font-size:13.500px;color:#1c12c6">0</div>
<div class="t" style="left:731.8px;top:582.2px;width:16px;text-align:center;font-size:13.500px;color:#1c12c6">0</div>
<div class="t" style="left:742.9px;top:582.2px;width:16px;text-align:center;font-size:13.500px;color:#1c12c6">0</div>
<div class="t" style="left:754.3px;top:582.7px;width:8px;text-align:center;font-size:13.500px;color:#1c12c6">,</div>
<div class="t" style="left:757.5px;top:582.2px;width:16px;text-align:center;font-size:13.500px;color:#1c12c6">0</div>
<div class="t" style="left:768.6px;top:582.2px;width:16px;text-align:center;font-size:13.500px;color:#1c12c6">0</div>
<div class="t" style="left:779.8px;top:582.2px;width:16px;text-align:center;font-size:13.500px;color:#1c12c6">0</div>
<div class="t" style="left:791.2px;top:582.7px;width:8px;text-align:center;font-size:13.500px;color:#1c12c6">,</div>
<div class="t" style="left:794.4px;top:582.2px;width:16px;text-align:center;font-size:13.500px;color:#1c12c6">0</div>
<div class="t" style="left:805.5px;top:582.2px;width:16px;text-align:center;font-size:13.500px;color:#1c12c6">0</div>
<div class="t" style="left:816.7px;top:582.2px;width:16px;text-align:center;font-size:13.500px;color:#1c12c6">0</div>
<div class="t" style="left:834.300px;top:582.7px;font-size:13px;color:#1c12c6">samples</div>
<svg class="a" style="left:886px;top:586px" width="8" height="6" viewBox="0 0 8 6"><path d="M0.300 0.800H7.300L3.800 4.600Z" fill="#000"/></svg>
<div class="vsep" style="left:11px;top:607px;height:28px;background:#dcdde2"></div>
<div class="grab" style="left:5px;top:612px;height:17px"></div>
<div class="sm" style="left:13px;top:608px;width:28px;height:26px;background:#e4ebfb"></div>
<svg class="a" style="left:13px;top:608px" width="28" height="26" viewBox="0 0 28 26"><path d="M7 5.800L20.500 12.500 7 19.200Z" fill="#468b6b" stroke="#468b6b" stroke-width="1" stroke-linejoin="round"/></svg>
<div class="t" style="left:46px;top:609px;font-size:10px;font-weight:bold;color:#111">&#8211;</div>
<div class="t" style="left:177.500px;top:609.500px;font-size:10px;font-weight:bold;color:#111">+</div>
<div class="a" style="left:46px;top:624px;width:141px;height:2px;background:#a9adb8"></div>
<div class="a" style="left:46px;top:619px;width:1px;height:5px;background:#a9adb8"></div>
<div class="a" style="left:56px;top:621px;width:1px;height:3px;background:#a9adb8"></div>
<div class="a" style="left:66px;top:621px;width:1px;height:3px;background:#a9adb8"></div>
<div class="a" style="left:76px;top:621px;width:1px;height:3px;background:#a9adb8"></div>
<div class="a" style="left:86px;top:621px;width:1px;height:3px;background:#a9adb8"></div>
<div class="a" style="left:96px;top:621px;width:1px;height:3px;background:#a9adb8"></div>
<div class="a" style="left:106px;top:621px;width:1px;height:3px;background:#a9adb8"></div>
<div class="a" style="left:116px;top:621px;width:1px;height:3px;background:#a9adb8"></div>
<div class="a" style="left:126px;top:621px;width:1px;height:3px;background:#a9adb8"></div>
<div class="a" style="left:136px;top:621px;width:1px;height:3px;background:#a9adb8"></div>
<div class="a" style="left:146px;top:621px;width:1px;height:3px;background:#a9adb8"></div>
<div class="a" style="left:156px;top:621px;width:1px;height:3px;background:#a9adb8"></div>
<div class="a" style="left:166px;top:621px;width:1px;height:3px;background:#a9adb8"></div>
<div class="a" style="left:176px;top:621px;width:1px;height:3px;background:#a9adb8"></div>
<div class="a" style="left:186px;top:619px;width:1px;height:5px;background:#a9adb8"></div>
<div class="a" style="left:88px;top:615px;width:10px;height:18px;background:#fafbfe;border:1px solid #8a8c94;border-radius:2.500px"></div>
<div class="a" style="left:92px;top:621px;width:2px;height:6px;background:#666"></div>
<div class="vsep" style="left:193px;top:607px;height:28px;background:#c9cacf"></div>
<div class="vsep" style="left:196px;top:607px;height:28px;background:#dcdde2"></div>
<div class="a" style="left:0;top:635px;width:1024px;height:25px;background:#f0f0f0"></div>
<div class="a" style="left:0;top:635px;width:1024px;height:1px;background:#c9c9cc"></div>
<div class="t" style="left:15.500px;top:643px;font-size:12px;color:#222">Stopped.</div>
<div class="vsep" style="left:185px;top:638px;height:21px;background:#d9d9d9"></div>
<div class="vsep" style="left:841px;top:638px;height:21px;background:#d9d9d9"></div>
<svg class="a" style="left:1010px;top:646px" width="12" height="12" viewBox="0 0 12 12"><g fill="#bdbdbd"><rect x="9.2" y="2.8" width="1.700" height="1.700"/><rect x="6.1" y="5.9" width="1.700" height="1.700"/><rect x="9.2" y="5.9" width="1.700" height="1.700"/><rect x="3" y="9" width="1.700" height="1.700"/><rect x="6.1" y="9" width="1.700" height="1.700"/><rect x="9.2" y="9" width="1.700" height="1.700"/></g></svg>
<div class="a" style="left:0;top:0;width:1024px;height:660px;border:1px solid #bdbdbd;border-radius:8px;box-shadow:0 0 0 8px #ffffff;pointer-events:none"></div>
</body></html>
